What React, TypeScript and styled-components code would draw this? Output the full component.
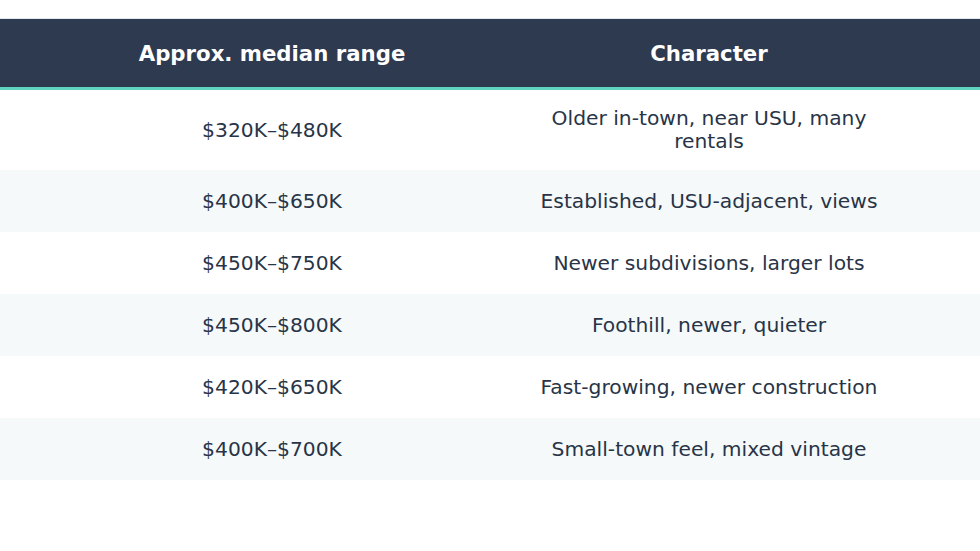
import React from "react";
import styled, { createGlobalStyle } from "styled-components";

const GlobalStyle = createGlobalStyle`
  html, body {
    margin: 0;
    padding: 0;
    background: #ffffff;
  }
  body {
    font-family: "DejaVu Sans", Verdana, sans-serif;
    color: #2d3748;
  }
`;

const Page = styled.div`
  padding-top: 18px;
  width: 980px;
  height: 551px;
  box-sizing: border-box;
  overflow: hidden;
`;

const Table = styled.table`
  width: 100%;
  border-collapse: collapse;
  table-layout: fixed;
  border-top: 1px solid #e3e8ee;
`;

const HeadRow = styled.tr`
  background: #2d3a50;
  border-bottom: 3px solid #5fd4bf;
`;

const HeadCell = styled.th<{ $first?: boolean }>`
  height: 70px;
  padding: ${(p) => (p.$first ? "0 0 0 24px" : "0 98px 0 16px")};
  width: ${(p) => (p.$first ? "520px" : "auto")};
  box-sizing: border-box;
  color: #ffffff;
  font-size: 21.25px;
  font-weight: 700;
  text-align: center;
  vertical-align: middle;
`;

const Row = styled.tr<{ $striped: boolean }>`
  height: 62px;
  background: ${(p) => (p.$striped ? "#f5f9f9" : "#ffffff")};
`;

const Cell = styled.td<{ $first?: boolean }>`
  padding: ${(p) => (p.$first ? "17px 0 17px 24px" : "17px 98px 17px 16px")};
  font-size: 20.25px;
  line-height: 23px;
  text-align: center;
  vertical-align: middle;
  color: #283447;
`;

const rows = [
  { range: "$320K–$480K", character: "Older in-town, near USU, many rentals" },
  { range: "$400K–$650K", character: "Established, USU-adjacent, views" },
  { range: "$450K–$750K", character: "Newer subdivisions, larger lots" },
  { range: "$450K–$800K", character: "Foothill, newer, quieter" },
  { range: "$420K–$650K", character: "Fast-growing, newer construction" },
  { range: "$400K–$700K", character: "Small-town feel, mixed vintage" },
];

export default function App() {
  return (
    <>
      <GlobalStyle />
      <Page>
        <Table>
          <thead>
            <HeadRow>
              <HeadCell $first>Approx. median range</HeadCell>
              <HeadCell>Character</HeadCell>
            </HeadRow>
          </thead>
          <tbody>
            {rows.map((r, i) => (
              <Row key={r.range + i} $striped={i % 2 === 1}>
                <Cell $first>{r.range}</Cell>
                <Cell>{r.character}</Cell>
              </Row>
            ))}
          </tbody>
        </Table>
      </Page>
    </>
  );
}
